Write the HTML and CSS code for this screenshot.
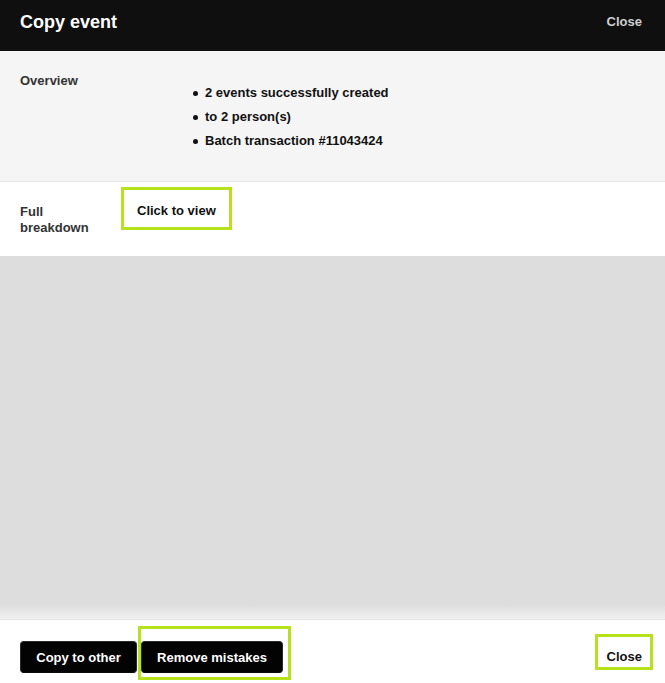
FILE: index.html
```html
<!DOCTYPE html>
<html lang="en">
<head>
<meta charset="utf-8">
<title>Copy event</title>
<link rel="stylesheet" href="styles.css">
</head>
<body>
<div class="dialog">
  <header class="header">
    <h1 class="title">Copy event</h1>
    <a class="header-close">Close</a>
  </header>
  <section class="overview">
    <div class="label">Overview</div>
    <ul class="summary">
      <li>2 events successfully created</li>
      <li>to 2 person(s)</li>
      <li>Batch transaction #11043424</li>
    </ul>
  </section>
  <section class="breakdown">
    <div class="label label-narrow">Full breakdown</div>
    <a class="highlight view-link">Click to view</a>
  </section>
  <div class="content-area"></div>
  <div class="fade"></div>
  <footer class="footer">
    <button class="btn btn-copy">Copy to other</button>
    <span class="highlight remove-wrap"><button class="btn">Remove mistakes</button></span>
    <a class="highlight footer-close">Close</a>
  </footer>
</div>
</body>
</html>
```
FILE: styles.css
```css
* { box-sizing: border-box; }
html, body { margin: 0; padding: 0; }
body {
  font-family: "Liberation Sans", Arial, sans-serif;
  font-size: 13px;
  line-height: 16px;
  background: #fff;
  color: #111;
}
.dialog {
  width: 665px;
  height: 683px;
  display: flex;
  flex-direction: column;
  overflow: hidden;
}
.header {
  height: 51px;
  flex: none;
  background: #0f0f0f;
  display: flex;
  justify-content: space-between;
  align-items: flex-start;
  padding: 0 23px 0 20px;
}
.title {
  margin: 11px 0 0;
  font-size: 18px;
  line-height: 22px;
  font-weight: bold;
  color: #fff;
}
.header-close {
  margin-top: 14px;
  font-weight: bold;
  color: #cfcfcf;
}
.label {
  font-weight: bold;
  color: #333;
  width: 101px;
  flex: none;
}
.label-narrow { width: 101px; padding-right: 20px; }
.overview {
  flex: none;
  height: 131px;
  background: #f5f5f5;
  border-bottom: 1px solid #e6e6e6;
  display: flex;
  align-items: flex-start;
  padding: 22px 20px 0;
}
.summary {
  list-style: none;
  margin: 8px 0 0 72px;
  padding: 0;
  font-weight: bold;
  color: #111;
}
.summary li {
  line-height: 24px;
  display: flex;
}
.summary li::before {
  content: "";
  width: 5px;
  height: 5px;
  border-radius: 50%;
  background: #111;
  margin: 10px 7px 0 0;
  flex: none;
}
.breakdown {
  flex: none;
  height: 74px;
  background: #fff;
  display: flex;
  align-items: flex-start;
  padding: 22px 20px 0;
}
.highlight {
  border: 3px solid #b5e21c;
}
.view-link {
  margin-top: -17px;
  padding: 13px 13px 8px;
  font-weight: bold;
  color: #111;
}
.content-area {
  flex: none;
  height: 349px;
  background: #dddddd;
}
.fade {
  flex: none;
  height: 15px;
  background: linear-gradient(#dedede, #f1f1f1);
  border-bottom: 1px solid #e2e2e2;
}
.footer {
  flex: 1;
  display: flex;
  align-items: flex-start;
  padding: 6px 12px 0 20px;
  background: #fff;
}
.btn {
  font-family: "Liberation Sans", Arial, sans-serif;
  font-size: 13px;
  line-height: 16px;
  font-weight: bold;
  color: #fff;
  background: #030303;
  border: 1px solid #2a2a2a;
  border-bottom-color: #0a0a0a;
  border-radius: 4px;
  height: 32px;
  padding: 1px 15px 0;
  cursor: pointer;
}
.btn-copy { margin-top: 15px; width: 117px; }
.remove-wrap {
  margin-left: 1px;
  padding: 12px 5px 4px 0;
  display: flex;
}
.remove-wrap .btn { width: 142px; }
.footer-close {
  margin-left: auto;
  margin-top: 8px;
  padding: 12px 8px 2px 9px;
  font-weight: bold;
  color: #111;
}
```
